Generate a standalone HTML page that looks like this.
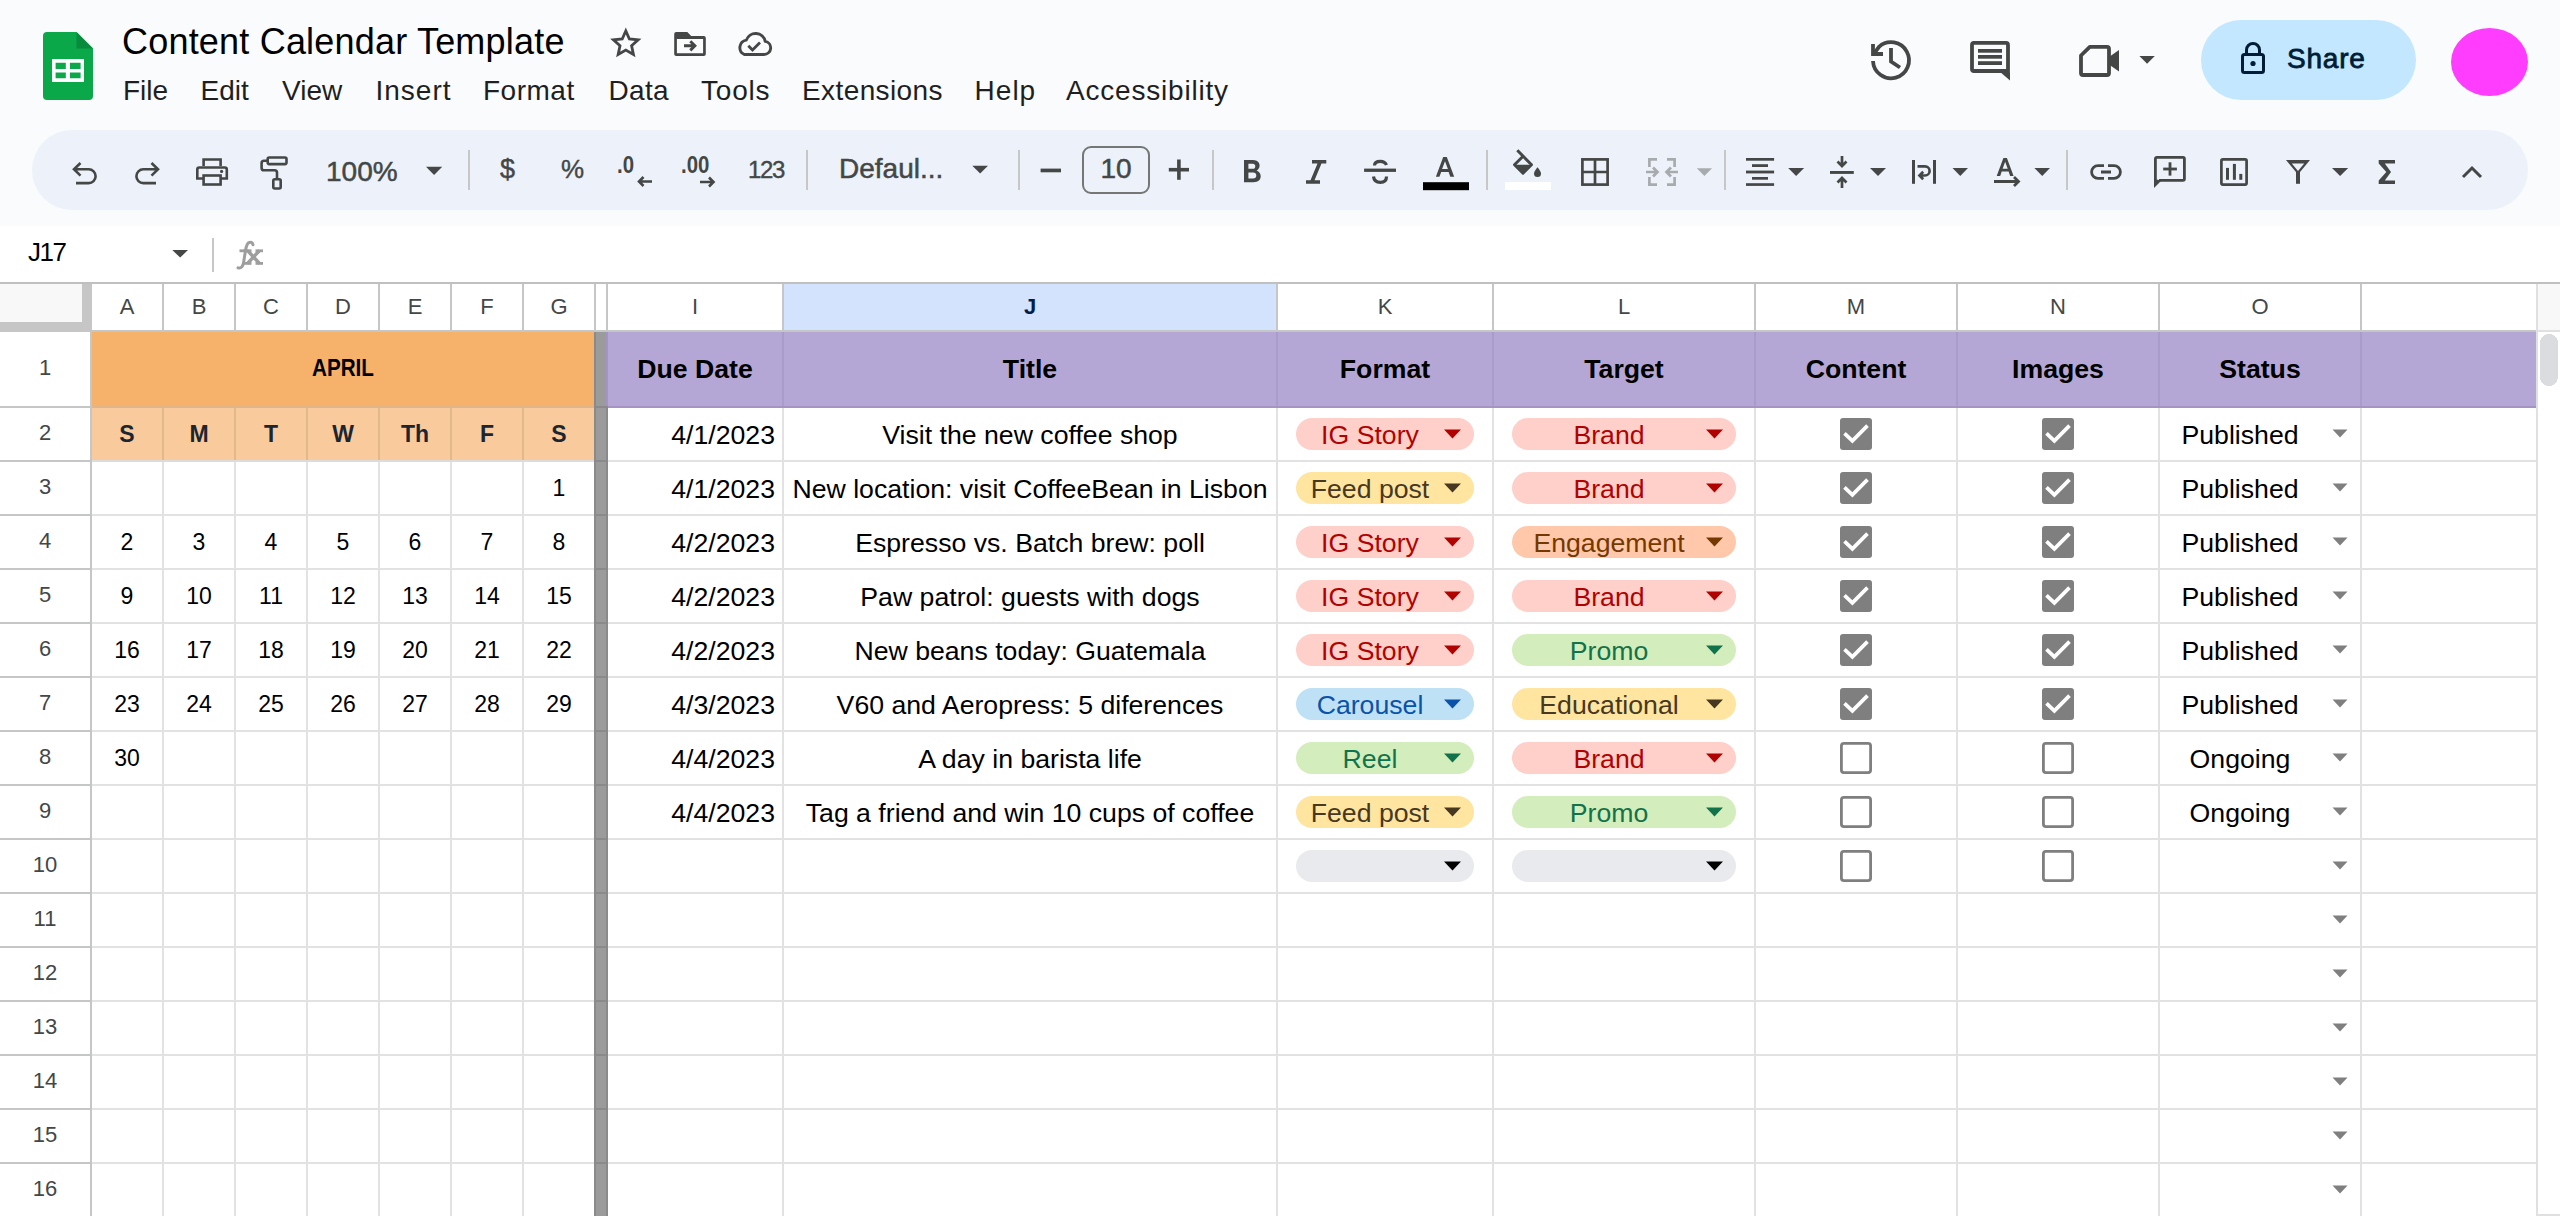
<!DOCTYPE html><html><head><meta charset="utf-8"><title>Content Calendar Template</title><style>
*{box-sizing:border-box}
html,body{margin:0;padding:0}
body{width:2560px;height:1216px;overflow:hidden;position:relative;background:#fff;font-family:"Liberation Sans", sans-serif;color:#000}
.t{position:absolute;white-space:nowrap}
.c{position:absolute;white-space:nowrap;font-size:26.67px;height:52px;line-height:54px;overflow:visible}
.svgl{position:absolute;left:0;top:0}

</style></head><body>
<div style="position:absolute;left:0;top:0;width:2560px;height:226px;background:#f9fbfd"></div>
<div style="position:absolute;left:32px;top:130px;width:2496px;height:80px;border-radius:40px;background:#edf2fa"></div>
<div style="position:absolute;left:2201px;top:20px;width:215px;height:80px;border-radius:40px;background:#c2e7ff"></div>
<div style="position:absolute;left:2451px;top:28px;width:77px;height:68px;border-radius:50%;background:#ff3dff"></div>
<div class="t" style="left:122px;top:18px;font-size:36px;line-height:48px;color:#000;letter-spacing:0.2px">Content Calendar Template</div>
<div class="t" style="left:123px;top:72px;font-size:28px;line-height:38px;color:#1f1f1f;letter-spacing:0px">File</div>
<div class="t" style="left:200.5px;top:72px;font-size:28px;line-height:38px;color:#1f1f1f;letter-spacing:0px">Edit</div>
<div class="t" style="left:282px;top:72px;font-size:28px;line-height:38px;color:#1f1f1f;letter-spacing:0px">View</div>
<div class="t" style="left:375.5px;top:72px;font-size:28px;line-height:38px;color:#1f1f1f;letter-spacing:1px">Insert</div>
<div class="t" style="left:483px;top:72px;font-size:28px;line-height:38px;color:#1f1f1f;letter-spacing:0.5px">Format</div>
<div class="t" style="left:608.5px;top:72px;font-size:28px;line-height:38px;color:#1f1f1f;letter-spacing:0.3px">Data</div>
<div class="t" style="left:701px;top:72px;font-size:28px;line-height:38px;color:#1f1f1f;letter-spacing:0.8px">Tools</div>
<div class="t" style="left:802px;top:72px;font-size:28px;line-height:38px;color:#1f1f1f;letter-spacing:0.4px">Extensions</div>
<div class="t" style="left:974.6px;top:72px;font-size:28px;line-height:38px;color:#1f1f1f;letter-spacing:1px">Help</div>
<div class="t" style="left:1066px;top:72px;font-size:28px;line-height:38px;color:#1f1f1f;letter-spacing:0.8px">Accessibility</div>
<div class="t" style="left:2287px;top:40px;font-size:28px;line-height:38px;color:#001d35;-webkit-text-stroke:0.8px #001d35;letter-spacing:0.8px">Share</div>
<div class="t" style="left:326px;top:153px;font-size:28px;line-height:38px;color:#444746;-webkit-text-stroke:0.5px #444746">100%</div>
<div class="t" style="left:748px;top:154px;font-size:24px;line-height:32px;color:#444746;letter-spacing:-1.3px;-webkit-text-stroke:0.4px #444746">123</div>
<div class="t" style="left:839px;top:150px;font-size:28px;line-height:38px;color:#444746;-webkit-text-stroke:0.5px #444746">Defaul...</div>
<div style="position:absolute;left:1082px;top:146px;width:68px;height:48px;border:2px solid #747775;border-radius:9px"></div>
<div class="t" style="left:1082px;top:150px;width:68px;text-align:center;font-size:28px;line-height:38px;color:#444746;-webkit-text-stroke:0.5px #444746">10</div>
<div class="t" style="left:500px;top:151px;font-size:27px;line-height:36px;color:#444746;-webkit-text-stroke:0.4px #444746">$</div>
<div class="t" style="left:561px;top:151px;font-size:26px;line-height:36px;color:#444746;-webkit-text-stroke:0.4px #444746">%</div>
<div class="t" style="left:617px;top:149px;font-size:24px;line-height:32px;color:#444746;font-weight:bold;transform:scaleX(0.85);transform-origin:0 0">.0</div>
<div class="t" style="left:681px;top:149px;font-size:24px;line-height:32px;color:#444746;font-weight:bold;transform:scaleX(0.85);transform-origin:0 0">.00</div>
<div class="t" style="left:28px;top:235px;font-size:26px;line-height:34px;color:#000;letter-spacing:-1.5px">J17</div>
<svg class="svgl" width="2560" height="300" viewBox="0 0 2560 300"><polygon points="625.80,30.90 629.39,38.96 638.16,39.88 631.60,45.79 633.44,54.42 625.80,50.00 618.16,54.42 620.00,45.79 613.44,39.88 622.21,38.96" fill="none" stroke="#444746" stroke-width="2.8" stroke-linejoin="miter"/><path d="M676.2,31.9 H687.3 L691.2,35.9 H703.8 a2,2 0 0 1 2,2 V54 a2,2 0 0 1 -2,2 H676.2 a2,2 0 0 1 -2,-2 V33.9 a2,2 0 0 1 2,-2 z M676.9,38.9 V53.2 H703.1 V38.9 z" fill="#444746" fill-rule="evenodd"/><path d="M684,45.8 H694 M690.3,41.2 L694.9,45.8 L690.3,50.4" fill="none" stroke="#444746" stroke-width="2.9"/><path d="M744.3,54.5 H764 a6.6,6.6 0 0 0 1.2,-13.1 a9.8,9.8 0 0 0 -18.9,-1.3 a7.6,7.6 0 0 0 -2,14.4 z" fill="none" stroke="#444746" stroke-width="2.9" stroke-linejoin="round"/><path d="M748.3,45.8 l4.2,4.2 l7.5,-7.5" fill="none" stroke="#444746" stroke-width="2.8"/><path d="M1874.5,53 L1879,46.8 A18,18 0 1 1 1873,61" fill="none" stroke="#444746" stroke-width="3.8"/><path d="M1873,44 V54 H1883" fill="none" stroke="#444746" stroke-width="3.8"/><path d="M1891,48 V61.5 L1900,67.5" fill="none" stroke="#444746" stroke-width="3.8"/><path d="M1973,42.9 H2006 a2,2 0 0 1 2,2 V71 H1974 a2,2 0 0 1 -2,-2 V44.9 a2,2 0 0 1 2,-2 z" fill="none" stroke="#444746" stroke-width="3.8"/><path d="M2001,72.8 H2010 V80.5 z" fill="#444746"/><rect x="1978" y="49" width="24" height="3.7" fill="#444746"/><rect x="1978" y="55" width="24" height="3.7" fill="#444746"/><rect x="1978" y="61.2" width="24" height="3.8" fill="#444746"/><path d="M2089.8,46.8 H2107 a2,2 0 0 1 2,2 V73 a2,2 0 0 1 -2,2 H2083 a2,2 0 0 1 -2,-2 V55.5 z" fill="none" stroke="#444746" stroke-width="3.8" stroke-linejoin="round"/><path d="M2109,57 L2119,50 V71.6 L2109,64.5 z" fill="#444746"/><path d="M2139.4,56 H2154.8 L2147.1,63.8 z" fill="#444746"/><rect x="2242.5" y="54.5" width="21" height="18" rx="2" fill="none" stroke="#001d35" stroke-width="3"/><path d="M2246.5,54.5 V50 a6.5,6.5 0 0 1 13,0 V54.5" fill="none" stroke="#001d35" stroke-width="3"/><circle cx="2253" cy="63.5" r="2.6" fill="#001d35"/><path d="M47,32 H76.5 L93,48.5 V96 a4,4 0 0 1 -4,4 H47 a4,4 0 0 1 -4,-4 V36 a4,4 0 0 1 4,-4 z" fill="#0ba84a"/><path d="M76.5,32 L93,48.5 H76.5 z" fill="#0a8a3c"/><path d="M52,59 H84 V82 H52 z M55.6,62.8 V68.9 H65.8 V62.8 z M69.9,62.8 V68.9 H80.6 V62.8 z M55.6,72.5 V78.3 H65.8 V72.5 z M69.9,72.5 V78.3 H80.6 V72.5 z" fill="#fff" fill-rule="evenodd"/><path d="M253,244.8 C252.5,242.5 250.5,241.6 248.8,242.6 C247,243.6 246.2,246.5 245.6,250 L243.6,262.5 C243,266.5 241,268.8 238,267.8" fill="none" stroke="#9e9e9e" stroke-width="3" stroke-linecap="round"/><rect x="239.5" y="249.4" width="8.5" height="2.8" fill="#9e9e9e"/><path d="M247.5,250.5 L259.5,263.5 M259.5,250.5 L247.5,263.5" fill="none" stroke="#9e9e9e" stroke-width="3.4"/><rect x="243.5" y="249.4" width="8" height="2.8" fill="#9e9e9e"/><rect x="255.5" y="249.4" width="7.5" height="2.8" fill="#9e9e9e"/><rect x="243.5" y="262" width="8" height="2.8" fill="#9e9e9e"/><rect x="255.5" y="262" width="7.5" height="2.8" fill="#9e9e9e"/><path d="M1244,160 H1253 C1257.5,160 1259.6,162.8 1259.6,165.5 C1259.6,168 1258.3,169.6 1256.6,170.5 C1259.1,171.4 1260.7,173.5 1260.7,176.3 C1260.7,179.8 1258.3,182.2 1253.5,182.2 H1244 Z M1248.4,163.7 V168.8 H1252.6 C1254.4,168.8 1255.3,167.8 1255.3,166.2 C1255.3,164.6 1254.4,163.7 1252.6,163.7 Z M1248.4,172.5 V178.5 H1253 C1255.2,178.5 1256.3,177.4 1256.3,175.5 C1256.3,173.6 1255.2,172.5 1253,172.5 Z" fill="#444746" fill-rule="evenodd"/><path d="M80.5,163 L74,169.3 L80.5,175.6 M74,169.3 H88.7 A6.9,6.9 0 0 1 88.7,183.1 H76" fill="none" stroke="#444746" stroke-width="2.6"/><path d="M151.5,163 L158,169.3 L151.5,175.6 M158,169.3 H143.3 A6.9,6.9 0 0 0 143.3,183.1 H156" fill="none" stroke="#444746" stroke-width="2.6"/><path d="M203.6,166 V159.5 H220.6 V166" fill="none" stroke="#444746" stroke-width="2.6"/><path d="M203.6,178.5 H197.3 V169.5 a2,2 0 0 1 2,-2 H224.8 a2,2 0 0 1 2,2 V178.5 H220.6" fill="none" stroke="#444746" stroke-width="2.6"/><rect x="203.6" y="175.5" width="17" height="9" fill="#edf2fa" stroke="#444746" stroke-width="2.6"/><circle cx="221.6" cy="171.4" r="1.6" fill="#444746"/><rect x="267.7" y="157.5" width="18.8" height="6.6" rx="1.5" fill="none" stroke="#444746" stroke-width="2.6"/><path d="M267.7,160.8 H264 a2.4,2.4 0 0 0 -2.4,2.4 V167.9 a2.4,2.4 0 0 0 2.4,2.4 H274.6 a2.4,2.4 0 0 1 2.4,2.4 V179" fill="none" stroke="#444746" stroke-width="2.6"/><rect x="273.3" y="179.3" width="7.4" height="9.2" rx="1.5" fill="none" stroke="#444746" stroke-width="2.6"/><path d="M426,166.7 H442.2 L434.1,175 z" fill="#444746"/><path d="M972.3,165.8 H988 L980.15,173.6 z" fill="#444746"/><path d="M1696.8,168.2 H1712 L1704.4,175.9 z" fill="#a8abae"/><path d="M1788.2,168 H1804.1 L1796.15,176 z" fill="#444746"/><path d="M1870,168 H1886 L1878.0,176 z" fill="#444746"/><path d="M1952.5,168 H1968 L1960.25,176 z" fill="#444746"/><path d="M2034.4,168 H2050 L2042.2,176 z" fill="#444746"/><path d="M2332,168 H2348.2 L2340.1,176 z" fill="#444746"/><path d="M172.3,250 H188 L180.15,257.6 z" fill="#444746"/><rect x="468" y="150" width="2" height="40" fill="#c7c7c7"/><rect x="806" y="150" width="2" height="40" fill="#c7c7c7"/><rect x="1018" y="150" width="2" height="40" fill="#c7c7c7"/><rect x="1212" y="150" width="2" height="40" fill="#c7c7c7"/><rect x="1486" y="150" width="2" height="40" fill="#c7c7c7"/><rect x="1724" y="150" width="2" height="40" fill="#c7c7c7"/><rect x="2066" y="150" width="2" height="40" fill="#c7c7c7"/><rect x="212" y="238" width="2" height="34" fill="#c7c7c7"/><path d="M652,181.5 H639 M643.5,177 L639,181.5 L643.5,186" fill="none" stroke="#444746" stroke-width="2.6"/><path d="M700,182 H713.5 M709,177.5 L713.5,182 L709,186.5" fill="none" stroke="#444746" stroke-width="2.6"/><rect x="1040.6" y="168.6" width="20.4" height="3.7" fill="#444746"/><rect x="1168.8" y="167.9" width="20.2" height="3.6" fill="#444746"/><rect x="1177.1" y="159.5" width="3.6" height="20.3" fill="#444746"/><path d="M1312,160 H1326.3 V163.6 H1321.5 L1314.5,180.3 H1320 V183.8 H1306 V180.3 H1310.5 L1317.5,163.6 H1312 z" fill="#444746"/><rect x="1364.1" y="168.6" width="31.9" height="3.3" fill="#444746"/><path d="M1374.5,165.5 C1374.5,162 1377,161.3 1380.3,161.3 C1383.5,161.3 1385.5,162.5 1386.5,165" fill="none" stroke="#444746" stroke-width="3.2"/><path d="M1373.5,176.5 C1374,181 1376.5,182.4 1380.3,182.4 C1384,182.4 1386.5,180.5 1386.5,176.5" fill="none" stroke="#444746" stroke-width="3.2"/><path d="M1435.9,176.8 L1443.2,157 H1446.8 L1454.2,176.8 H1450.3 L1448.6,172.1 H1441.2 L1439.4,176.8 z M1442.1,169.1 H1447.9 L1445,161.2 z" fill="#444746" fill-rule="evenodd"/><rect x="1423" y="182.2" width="46" height="8" fill="#000"/><path d="M1517.3,150.3 L1531.5,164.8 L1523,173.3 L1514.5,164.8 L1522.8,156.5" fill="none" stroke="#444746" stroke-width="2.9" stroke-linejoin="round"/><path d="M1514,164.8 H1532 L1523,173.8 z" fill="#444746"/><path d="M1537.5,167.3 C1535.5,170 1534,171.8 1534,173.5 a3.5,3.5 0 0 0 7,0 C1541,171.8 1539.5,170 1537.5,167.3 z" fill="#444746"/><rect x="1505" y="182" width="46" height="8" fill="#fff"/><rect x="1582.4" y="159.4" width="25.2" height="25.2" fill="none" stroke="#444746" stroke-width="2.7"/><path d="M1595,159 V185 M1582,172 H1608" fill="none" stroke="#444746" stroke-width="2.7"/><path d="M1657,159.3 H1649.4 V167 M1649.4,177 V184.7 H1657 M1667,159.3 H1674.6 V167 M1674.6,177 V184.7 H1667" fill="none" stroke="#a8abae" stroke-width="2.7"/><path d="M1646,172 H1657.5 M1653,167.5 L1657.5,172 L1653,176.5 M1678,172 H1666.5 M1671,167.5 L1666.5,172 L1671,176.5" fill="none" stroke="#a8abae" stroke-width="2.7"/><rect x="1746" y="158" width="28.1" height="2.7" fill="#444746"/><rect x="1752" y="164.2" width="16" height="2.8" fill="#444746"/><rect x="1746" y="170.6" width="28.1" height="2.8" fill="#444746"/><rect x="1752" y="177" width="16" height="2.7" fill="#444746"/><rect x="1746" y="183.2" width="28.1" height="2.7" fill="#444746"/><rect x="1830" y="171" width="23.8" height="2.9" fill="#444746"/><path d="M1842,156 V166 M1837.5,161.5 L1842,166 L1846.5,161.5 M1842,188 V178 M1837.5,182.5 L1842,178 L1846.5,182.5" fill="none" stroke="#444746" stroke-width="2.7"/><rect x="1912" y="160" width="3" height="23.8" fill="#444746"/><rect x="1933" y="160" width="3" height="23.8" fill="#444746"/><path d="M1917.5,166.3 H1925 A4.6,4.6 0 0 1 1925,175.5 H1919.5 M1923.2,171.8 L1919.5,175.5 L1923.2,179.2" fill="none" stroke="#444746" stroke-width="2.7"/><path d="M1996.7,175.9 L2003.4,158 H2006.9 L2013.6,175.9 H2010.1 L2008.6,171.6 H2001.7 L2000.2,175.9 z M2002.6,168.8 H2007.7 L2005.15,161.7 z" fill="#444746" fill-rule="evenodd"/><path d="M1994,181.5 H2018 M2014,177 L2018.5,181.5 L2014,186" fill="none" stroke="#444746" stroke-width="2.8"/><path d="M2104,165.6 H2098 A6.4,6.4 0 0 0 2098,178.4 H2104 M2108,165.6 H2114 A6.4,6.4 0 0 1 2114,178.4 H2108 M2101,172 H2111" fill="none" stroke="#444746" stroke-width="2.8"/><path d="M2155.4,183 V158.8 a1.4,1.4 0 0 1 1.4,-1.4 H2183 a1.4,1.4 0 0 1 1.4,1.4 V179 a1.4,1.4 0 0 1 -1.4,1.4 H2159" fill="none" stroke="#444746" stroke-width="2.8"/><path d="M2154,179 V188 L2161.5,180.4 z" fill="#444746"/><rect x="2163.2" y="167.6" width="13.7" height="2.8" fill="#444746"/><rect x="2168.6" y="162.3" width="2.8" height="13.3" fill="#444746"/><rect x="2221.4" y="159.4" width="25.2" height="25.2" rx="1.5" fill="none" stroke="#444746" stroke-width="2.7"/><rect x="2226" y="167.9" width="3" height="11.9" fill="#444746"/><rect x="2232.9" y="163.9" width="3" height="15.9" fill="#444746"/><rect x="2239.3" y="173.9" width="3" height="5.9" fill="#444746"/><path d="M2286,160 H2310 L2298,174.5 z M2291.8,163.4 L2298,170.9 L2304.2,163.4 z" fill="#444746" fill-rule="evenodd"/><rect x="2296" y="171" width="4" height="12.8" fill="#444746"/><path d="M2378.7,160 H2395 V163.6 H2384.8 L2391,172 L2384.8,180.4 H2395 V184 H2378.7 V180.6 L2386.3,172 L2378.7,163.4 z" fill="#444746"/><path d="M2463,177 L2472,168 L2481,177" fill="none" stroke="#444746" stroke-width="3"/></svg>
<svg class="svgl" width="2560" height="1216" viewBox="0 0 2560 1216" shape-rendering="crispEdges"><rect x="92" y="460" width="502" height="2" fill="#e2e2e2"/><rect x="608" y="460" width="1928" height="2" fill="#e2e2e2"/><rect x="92" y="514" width="502" height="2" fill="#e2e2e2"/><rect x="608" y="514" width="1928" height="2" fill="#e2e2e2"/><rect x="92" y="568" width="502" height="2" fill="#e2e2e2"/><rect x="608" y="568" width="1928" height="2" fill="#e2e2e2"/><rect x="92" y="622" width="502" height="2" fill="#e2e2e2"/><rect x="608" y="622" width="1928" height="2" fill="#e2e2e2"/><rect x="92" y="676" width="502" height="2" fill="#e2e2e2"/><rect x="608" y="676" width="1928" height="2" fill="#e2e2e2"/><rect x="92" y="730" width="502" height="2" fill="#e2e2e2"/><rect x="608" y="730" width="1928" height="2" fill="#e2e2e2"/><rect x="92" y="784" width="502" height="2" fill="#e2e2e2"/><rect x="608" y="784" width="1928" height="2" fill="#e2e2e2"/><rect x="92" y="838" width="502" height="2" fill="#e2e2e2"/><rect x="608" y="838" width="1928" height="2" fill="#e2e2e2"/><rect x="92" y="892" width="502" height="2" fill="#e2e2e2"/><rect x="608" y="892" width="1928" height="2" fill="#e2e2e2"/><rect x="92" y="946" width="502" height="2" fill="#e2e2e2"/><rect x="608" y="946" width="1928" height="2" fill="#e2e2e2"/><rect x="92" y="1000" width="502" height="2" fill="#e2e2e2"/><rect x="608" y="1000" width="1928" height="2" fill="#e2e2e2"/><rect x="92" y="1054" width="502" height="2" fill="#e2e2e2"/><rect x="608" y="1054" width="1928" height="2" fill="#e2e2e2"/><rect x="92" y="1108" width="502" height="2" fill="#e2e2e2"/><rect x="608" y="1108" width="1928" height="2" fill="#e2e2e2"/><rect x="92" y="1162" width="502" height="2" fill="#e2e2e2"/><rect x="608" y="1162" width="1928" height="2" fill="#e2e2e2"/><rect x="92" y="1216" width="502" height="2" fill="#e2e2e2"/><rect x="608" y="1216" width="1928" height="2" fill="#e2e2e2"/><rect x="92" y="406" width="502" height="2" fill="#e2e2e2"/><rect x="162" y="408" width="2" height="808" fill="#e2e2e2"/><rect x="234" y="408" width="2" height="808" fill="#e2e2e2"/><rect x="306" y="408" width="2" height="808" fill="#e2e2e2"/><rect x="378" y="408" width="2" height="808" fill="#e2e2e2"/><rect x="450" y="408" width="2" height="808" fill="#e2e2e2"/><rect x="522" y="408" width="2" height="808" fill="#e2e2e2"/><rect x="782" y="408" width="2" height="808" fill="#e2e2e2"/><rect x="1276" y="408" width="2" height="808" fill="#e2e2e2"/><rect x="1492" y="408" width="2" height="808" fill="#e2e2e2"/><rect x="1754" y="408" width="2" height="808" fill="#e2e2e2"/><rect x="1956" y="408" width="2" height="808" fill="#e2e2e2"/><rect x="2158" y="408" width="2" height="808" fill="#e2e2e2"/><rect x="2360" y="408" width="2" height="808" fill="#e2e2e2"/><rect x="2536" y="408" width="2" height="808" fill="#e2e2e2"/><rect x="92" y="332" width="502" height="74" fill="#f6b26b"/><rect x="606" y="332" width="1930" height="74" fill="#b4a7d6"/><rect x="606" y="406" width="1930" height="2" fill="#a394c3"/><rect x="782" y="332" width="2" height="74" fill="#a99bca"/><rect x="1276" y="332" width="2" height="74" fill="#a99bca"/><rect x="1492" y="332" width="2" height="74" fill="#a99bca"/><rect x="1754" y="332" width="2" height="74" fill="#a99bca"/><rect x="1956" y="332" width="2" height="74" fill="#a99bca"/><rect x="2158" y="332" width="2" height="74" fill="#a99bca"/><rect x="2360" y="332" width="2" height="74" fill="#a99bca"/><rect x="606" y="332" width="2" height="76" fill="#a394c3"/><rect x="92" y="408" width="502" height="52" fill="#f9cb9c"/><rect x="162" y="408" width="2" height="52" fill="#e3b88a"/><rect x="234" y="408" width="2" height="52" fill="#e3b88a"/><rect x="306" y="408" width="2" height="52" fill="#e3b88a"/><rect x="378" y="408" width="2" height="52" fill="#e3b88a"/><rect x="450" y="408" width="2" height="52" fill="#e3b88a"/><rect x="522" y="408" width="2" height="52" fill="#e3b88a"/><rect x="92" y="406" width="502" height="2" fill="#e0b58b"/><rect x="92" y="460" width="502" height="2" fill="#dcdcdc"/><rect x="594" y="332" width="14" height="884" fill="#9b9b9b"/><rect x="594" y="332" width="2" height="884" fill="#8a8a8a"/><rect x="606" y="408" width="2" height="808" fill="#8a8a8a"/><rect x="594" y="406" width="14" height="2" fill="#8a8a8a"/><rect x="594" y="460" width="14" height="2" fill="#8a8a8a"/><rect x="594" y="514" width="14" height="2" fill="#8a8a8a"/><rect x="594" y="568" width="14" height="2" fill="#8a8a8a"/><rect x="594" y="622" width="14" height="2" fill="#8a8a8a"/><rect x="594" y="676" width="14" height="2" fill="#8a8a8a"/><rect x="594" y="730" width="14" height="2" fill="#8a8a8a"/><rect x="594" y="784" width="14" height="2" fill="#8a8a8a"/><rect x="594" y="838" width="14" height="2" fill="#8a8a8a"/><rect x="594" y="892" width="14" height="2" fill="#8a8a8a"/><rect x="594" y="946" width="14" height="2" fill="#8a8a8a"/><rect x="594" y="1000" width="14" height="2" fill="#8a8a8a"/><rect x="594" y="1054" width="14" height="2" fill="#8a8a8a"/><rect x="594" y="1108" width="14" height="2" fill="#8a8a8a"/><rect x="594" y="1162" width="14" height="2" fill="#8a8a8a"/><rect x="594" y="1216" width="14" height="2" fill="#8a8a8a"/><rect x="606" y="332" width="2" height="74" fill="#a394c3"/><rect x="0" y="282" width="2560" height="2" fill="#c0c0c0"/><rect x="784" y="284" width="492" height="46" fill="#d3e3fd"/><rect x="0" y="330" width="2538" height="2" fill="#c4c7c5"/><rect x="2538" y="330" width="22" height="2" fill="#e0e0e0"/><rect x="162" y="284" width="2" height="46" fill="#c4c7c5"/><rect x="234" y="284" width="2" height="46" fill="#c4c7c5"/><rect x="306" y="284" width="2" height="46" fill="#c4c7c5"/><rect x="378" y="284" width="2" height="46" fill="#c4c7c5"/><rect x="450" y="284" width="2" height="46" fill="#c4c7c5"/><rect x="522" y="284" width="2" height="46" fill="#c4c7c5"/><rect x="594" y="284" width="2" height="46" fill="#c4c7c5"/><rect x="782" y="284" width="2" height="46" fill="#c4c7c5"/><rect x="1276" y="284" width="2" height="46" fill="#c4c7c5"/><rect x="1492" y="284" width="2" height="46" fill="#c4c7c5"/><rect x="1754" y="284" width="2" height="46" fill="#c4c7c5"/><rect x="1956" y="284" width="2" height="46" fill="#c4c7c5"/><rect x="2158" y="284" width="2" height="46" fill="#c4c7c5"/><rect x="2360" y="284" width="2" height="46" fill="#c4c7c5"/><rect x="2536" y="284" width="2" height="46" fill="#c4c7c5"/><rect x="594" y="284" width="2" height="46" fill="#c4c7c5"/><rect x="606" y="284" width="2" height="46" fill="#c4c7c5"/><rect x="0" y="284" width="82" height="38" fill="#f8f8f8"/><rect x="0" y="322" width="92" height="10" fill="#c6c6c6"/><rect x="82" y="284" width="10" height="48" fill="#c6c6c6"/><rect x="90" y="332" width="2" height="884" fill="#c4c7c5"/><rect x="0" y="406" width="90" height="2" fill="#c4c7c5"/><rect x="0" y="460" width="90" height="2" fill="#c4c7c5"/><rect x="0" y="514" width="90" height="2" fill="#c4c7c5"/><rect x="0" y="568" width="90" height="2" fill="#c4c7c5"/><rect x="0" y="622" width="90" height="2" fill="#c4c7c5"/><rect x="0" y="676" width="90" height="2" fill="#c4c7c5"/><rect x="0" y="730" width="90" height="2" fill="#c4c7c5"/><rect x="0" y="784" width="90" height="2" fill="#c4c7c5"/><rect x="0" y="838" width="90" height="2" fill="#c4c7c5"/><rect x="0" y="892" width="90" height="2" fill="#c4c7c5"/><rect x="0" y="946" width="90" height="2" fill="#c4c7c5"/><rect x="0" y="1000" width="90" height="2" fill="#c4c7c5"/><rect x="0" y="1054" width="90" height="2" fill="#c4c7c5"/><rect x="0" y="1108" width="90" height="2" fill="#c4c7c5"/><rect x="0" y="1162" width="90" height="2" fill="#c4c7c5"/><rect x="0" y="1216" width="90" height="2" fill="#c4c7c5"/><rect x="2538" y="284" width="22" height="46" fill="#f8f8f8"/><rect x="2536" y="284" width="2" height="932" fill="#e0e0e0"/><rect x="2538" y="1214" width="22" height="2" fill="#e0e0e0"/><rect x="2540" y="334" width="18" height="52" rx="9" fill="#dadce0"/></svg>
<div class="t" style="left:92px;top:284px;width:70px;text-align:center;font-size:22px;line-height:46px;color:#444746;font-weight:normal">A</div>
<div class="t" style="left:164px;top:284px;width:70px;text-align:center;font-size:22px;line-height:46px;color:#444746;font-weight:normal">B</div>
<div class="t" style="left:236px;top:284px;width:70px;text-align:center;font-size:22px;line-height:46px;color:#444746;font-weight:normal">C</div>
<div class="t" style="left:308px;top:284px;width:70px;text-align:center;font-size:22px;line-height:46px;color:#444746;font-weight:normal">D</div>
<div class="t" style="left:380px;top:284px;width:70px;text-align:center;font-size:22px;line-height:46px;color:#444746;font-weight:normal">E</div>
<div class="t" style="left:452px;top:284px;width:70px;text-align:center;font-size:22px;line-height:46px;color:#444746;font-weight:normal">F</div>
<div class="t" style="left:524px;top:284px;width:70px;text-align:center;font-size:22px;line-height:46px;color:#444746;font-weight:normal">G</div>
<div class="t" style="left:608px;top:284px;width:174px;text-align:center;font-size:22px;line-height:46px;color:#444746;font-weight:normal">I</div>
<div class="t" style="left:784px;top:284px;width:492px;text-align:center;font-size:22px;line-height:46px;color:#041e49;font-weight:bold">J</div>
<div class="t" style="left:1278px;top:284px;width:214px;text-align:center;font-size:22px;line-height:46px;color:#444746;font-weight:normal">K</div>
<div class="t" style="left:1494px;top:284px;width:260px;text-align:center;font-size:22px;line-height:46px;color:#444746;font-weight:normal">L</div>
<div class="t" style="left:1756px;top:284px;width:200px;text-align:center;font-size:22px;line-height:46px;color:#444746;font-weight:normal">M</div>
<div class="t" style="left:1958px;top:284px;width:200px;text-align:center;font-size:22px;line-height:46px;color:#444746;font-weight:normal">N</div>
<div class="t" style="left:2160px;top:284px;width:200px;text-align:center;font-size:22px;line-height:46px;color:#444746;font-weight:normal">O</div>
<div class="t" style="left:0;top:331px;width:90px;text-align:center;font-size:22px;line-height:74px;color:#444746">1</div>
<div class="t" style="left:0;top:407px;width:90px;text-align:center;font-size:22px;line-height:52px;color:#444746">2</div>
<div class="t" style="left:0;top:461px;width:90px;text-align:center;font-size:22px;line-height:52px;color:#444746">3</div>
<div class="t" style="left:0;top:515px;width:90px;text-align:center;font-size:22px;line-height:52px;color:#444746">4</div>
<div class="t" style="left:0;top:569px;width:90px;text-align:center;font-size:22px;line-height:52px;color:#444746">5</div>
<div class="t" style="left:0;top:623px;width:90px;text-align:center;font-size:22px;line-height:52px;color:#444746">6</div>
<div class="t" style="left:0;top:677px;width:90px;text-align:center;font-size:22px;line-height:52px;color:#444746">7</div>
<div class="t" style="left:0;top:731px;width:90px;text-align:center;font-size:22px;line-height:52px;color:#444746">8</div>
<div class="t" style="left:0;top:785px;width:90px;text-align:center;font-size:22px;line-height:52px;color:#444746">9</div>
<div class="t" style="left:0;top:839px;width:90px;text-align:center;font-size:22px;line-height:52px;color:#444746">10</div>
<div class="t" style="left:0;top:893px;width:90px;text-align:center;font-size:22px;line-height:52px;color:#444746">11</div>
<div class="t" style="left:0;top:947px;width:90px;text-align:center;font-size:22px;line-height:52px;color:#444746">12</div>
<div class="t" style="left:0;top:1001px;width:90px;text-align:center;font-size:22px;line-height:52px;color:#444746">13</div>
<div class="t" style="left:0;top:1055px;width:90px;text-align:center;font-size:22px;line-height:52px;color:#444746">14</div>
<div class="t" style="left:0;top:1109px;width:90px;text-align:center;font-size:22px;line-height:52px;color:#444746">15</div>
<div class="t" style="left:0;top:1163px;width:90px;text-align:center;font-size:22px;line-height:52px;color:#444746">16</div>
<div class="t" style="left:92px;top:332px;width:502px;text-align:center;font-size:24px;line-height:71px;font-weight:bold;color:#000;transform:scaleX(0.86)">APRIL</div>
<div class="t" style="left:92px;top:408px;width:70px;text-align:center;font-size:23px;line-height:52px;font-weight:bold;color:#1c2530">S</div>
<div class="t" style="left:164px;top:408px;width:70px;text-align:center;font-size:23px;line-height:52px;font-weight:bold;color:#1c2530">M</div>
<div class="t" style="left:236px;top:408px;width:70px;text-align:center;font-size:23px;line-height:52px;font-weight:bold;color:#1c2530">T</div>
<div class="t" style="left:308px;top:408px;width:70px;text-align:center;font-size:23px;line-height:52px;font-weight:bold;color:#1c2530">W</div>
<div class="t" style="left:380px;top:408px;width:70px;text-align:center;font-size:23px;line-height:52px;font-weight:bold;color:#1c2530">Th</div>
<div class="t" style="left:452px;top:408px;width:70px;text-align:center;font-size:23px;line-height:52px;font-weight:bold;color:#1c2530">F</div>
<div class="t" style="left:524px;top:408px;width:70px;text-align:center;font-size:23px;line-height:52px;font-weight:bold;color:#1c2530">S</div>
<div class="t" style="left:524px;top:462px;width:70px;text-align:center;font-size:23px;line-height:52px;color:#000">1</div>
<div class="t" style="left:92px;top:516px;width:70px;text-align:center;font-size:23px;line-height:52px;color:#000">2</div>
<div class="t" style="left:164px;top:516px;width:70px;text-align:center;font-size:23px;line-height:52px;color:#000">3</div>
<div class="t" style="left:236px;top:516px;width:70px;text-align:center;font-size:23px;line-height:52px;color:#000">4</div>
<div class="t" style="left:308px;top:516px;width:70px;text-align:center;font-size:23px;line-height:52px;color:#000">5</div>
<div class="t" style="left:380px;top:516px;width:70px;text-align:center;font-size:23px;line-height:52px;color:#000">6</div>
<div class="t" style="left:452px;top:516px;width:70px;text-align:center;font-size:23px;line-height:52px;color:#000">7</div>
<div class="t" style="left:524px;top:516px;width:70px;text-align:center;font-size:23px;line-height:52px;color:#000">8</div>
<div class="t" style="left:92px;top:570px;width:70px;text-align:center;font-size:23px;line-height:52px;color:#000">9</div>
<div class="t" style="left:164px;top:570px;width:70px;text-align:center;font-size:23px;line-height:52px;color:#000">10</div>
<div class="t" style="left:236px;top:570px;width:70px;text-align:center;font-size:23px;line-height:52px;color:#000">11</div>
<div class="t" style="left:308px;top:570px;width:70px;text-align:center;font-size:23px;line-height:52px;color:#000">12</div>
<div class="t" style="left:380px;top:570px;width:70px;text-align:center;font-size:23px;line-height:52px;color:#000">13</div>
<div class="t" style="left:452px;top:570px;width:70px;text-align:center;font-size:23px;line-height:52px;color:#000">14</div>
<div class="t" style="left:524px;top:570px;width:70px;text-align:center;font-size:23px;line-height:52px;color:#000">15</div>
<div class="t" style="left:92px;top:624px;width:70px;text-align:center;font-size:23px;line-height:52px;color:#000">16</div>
<div class="t" style="left:164px;top:624px;width:70px;text-align:center;font-size:23px;line-height:52px;color:#000">17</div>
<div class="t" style="left:236px;top:624px;width:70px;text-align:center;font-size:23px;line-height:52px;color:#000">18</div>
<div class="t" style="left:308px;top:624px;width:70px;text-align:center;font-size:23px;line-height:52px;color:#000">19</div>
<div class="t" style="left:380px;top:624px;width:70px;text-align:center;font-size:23px;line-height:52px;color:#000">20</div>
<div class="t" style="left:452px;top:624px;width:70px;text-align:center;font-size:23px;line-height:52px;color:#000">21</div>
<div class="t" style="left:524px;top:624px;width:70px;text-align:center;font-size:23px;line-height:52px;color:#000">22</div>
<div class="t" style="left:92px;top:678px;width:70px;text-align:center;font-size:23px;line-height:52px;color:#000">23</div>
<div class="t" style="left:164px;top:678px;width:70px;text-align:center;font-size:23px;line-height:52px;color:#000">24</div>
<div class="t" style="left:236px;top:678px;width:70px;text-align:center;font-size:23px;line-height:52px;color:#000">25</div>
<div class="t" style="left:308px;top:678px;width:70px;text-align:center;font-size:23px;line-height:52px;color:#000">26</div>
<div class="t" style="left:380px;top:678px;width:70px;text-align:center;font-size:23px;line-height:52px;color:#000">27</div>
<div class="t" style="left:452px;top:678px;width:70px;text-align:center;font-size:23px;line-height:52px;color:#000">28</div>
<div class="t" style="left:524px;top:678px;width:70px;text-align:center;font-size:23px;line-height:52px;color:#000">29</div>
<div class="t" style="left:92px;top:732px;width:70px;text-align:center;font-size:23px;line-height:52px;color:#000">30</div>
<div class="t" style="left:608px;top:332px;width:174px;text-align:center;font-size:26.67px;line-height:74px;font-weight:bold;color:#000">Due Date</div>
<div class="t" style="left:784px;top:332px;width:492px;text-align:center;font-size:26.67px;line-height:74px;font-weight:bold;color:#000">Title</div>
<div class="t" style="left:1278px;top:332px;width:214px;text-align:center;font-size:26.67px;line-height:74px;font-weight:bold;color:#000">Format</div>
<div class="t" style="left:1494px;top:332px;width:260px;text-align:center;font-size:26.67px;line-height:74px;font-weight:bold;color:#000">Target</div>
<div class="t" style="left:1756px;top:332px;width:200px;text-align:center;font-size:26.67px;line-height:74px;font-weight:bold;color:#000">Content</div>
<div class="t" style="left:1958px;top:332px;width:200px;text-align:center;font-size:26.67px;line-height:74px;font-weight:bold;color:#000">Images</div>
<div class="t" style="left:2160px;top:332px;width:200px;text-align:center;font-size:26.67px;line-height:74px;font-weight:bold;color:#000">Status</div>
<div class="c" style="left:608px;top:408px;width:167px;text-align:right">4/1/2023</div>
<div class="c" style="left:784px;top:408px;width:492px;text-align:center">Visit the new coffee shop</div>
<div style="position:absolute;left:1296px;top:418px;width:178px;height:32px;border-radius:16px;background:#ffcfc9"></div>
<div class="c" style="left:1296px;top:408px;width:148px;text-align:center;color:#b10202">IG Story</div>
<div style="position:absolute;left:1512px;top:418px;width:224px;height:32px;border-radius:16px;background:#ffcfc9"></div>
<div class="c" style="left:1512px;top:408px;width:194px;text-align:center;color:#b10202">Brand</div>
<div class="c" style="left:608px;top:462px;width:167px;text-align:right">4/1/2023</div>
<div class="c" style="left:784px;top:462px;width:492px;text-align:center">New location: visit CoffeeBean in Lisbon</div>
<div style="position:absolute;left:1296px;top:472px;width:178px;height:32px;border-radius:16px;background:#ffe5a0"></div>
<div class="c" style="left:1296px;top:462px;width:148px;text-align:center;color:#473821">Feed post</div>
<div style="position:absolute;left:1512px;top:472px;width:224px;height:32px;border-radius:16px;background:#ffcfc9"></div>
<div class="c" style="left:1512px;top:462px;width:194px;text-align:center;color:#b10202">Brand</div>
<div class="c" style="left:608px;top:516px;width:167px;text-align:right">4/2/2023</div>
<div class="c" style="left:784px;top:516px;width:492px;text-align:center">Espresso vs. Batch brew: poll</div>
<div style="position:absolute;left:1296px;top:526px;width:178px;height:32px;border-radius:16px;background:#ffcfc9"></div>
<div class="c" style="left:1296px;top:516px;width:148px;text-align:center;color:#b10202">IG Story</div>
<div style="position:absolute;left:1512px;top:526px;width:224px;height:32px;border-radius:16px;background:#ffc8aa"></div>
<div class="c" style="left:1512px;top:516px;width:194px;text-align:center;color:#753800">Engagement</div>
<div class="c" style="left:608px;top:570px;width:167px;text-align:right">4/2/2023</div>
<div class="c" style="left:784px;top:570px;width:492px;text-align:center">Paw patrol: guests with dogs</div>
<div style="position:absolute;left:1296px;top:580px;width:178px;height:32px;border-radius:16px;background:#ffcfc9"></div>
<div class="c" style="left:1296px;top:570px;width:148px;text-align:center;color:#b10202">IG Story</div>
<div style="position:absolute;left:1512px;top:580px;width:224px;height:32px;border-radius:16px;background:#ffcfc9"></div>
<div class="c" style="left:1512px;top:570px;width:194px;text-align:center;color:#b10202">Brand</div>
<div class="c" style="left:608px;top:624px;width:167px;text-align:right">4/2/2023</div>
<div class="c" style="left:784px;top:624px;width:492px;text-align:center">New beans today: Guatemala</div>
<div style="position:absolute;left:1296px;top:634px;width:178px;height:32px;border-radius:16px;background:#ffcfc9"></div>
<div class="c" style="left:1296px;top:624px;width:148px;text-align:center;color:#b10202">IG Story</div>
<div style="position:absolute;left:1512px;top:634px;width:224px;height:32px;border-radius:16px;background:#d4edbc"></div>
<div class="c" style="left:1512px;top:624px;width:194px;text-align:center;color:#11734b">Promo</div>
<div class="c" style="left:608px;top:678px;width:167px;text-align:right">4/3/2023</div>
<div class="c" style="left:784px;top:678px;width:492px;text-align:center">V60 and Aeropress: 5 diferences</div>
<div style="position:absolute;left:1296px;top:688px;width:178px;height:32px;border-radius:16px;background:#bfe1f6"></div>
<div class="c" style="left:1296px;top:678px;width:148px;text-align:center;color:#0a53a8">Carousel</div>
<div style="position:absolute;left:1512px;top:688px;width:224px;height:32px;border-radius:16px;background:#ffe5a0"></div>
<div class="c" style="left:1512px;top:678px;width:194px;text-align:center;color:#473821">Educational</div>
<div class="c" style="left:608px;top:732px;width:167px;text-align:right">4/4/2023</div>
<div class="c" style="left:784px;top:732px;width:492px;text-align:center">A day in barista life</div>
<div style="position:absolute;left:1296px;top:742px;width:178px;height:32px;border-radius:16px;background:#d4edbc"></div>
<div class="c" style="left:1296px;top:732px;width:148px;text-align:center;color:#11734b">Reel</div>
<div style="position:absolute;left:1512px;top:742px;width:224px;height:32px;border-radius:16px;background:#ffcfc9"></div>
<div class="c" style="left:1512px;top:732px;width:194px;text-align:center;color:#b10202">Brand</div>
<div class="c" style="left:608px;top:786px;width:167px;text-align:right">4/4/2023</div>
<div class="c" style="left:784px;top:786px;width:492px;text-align:center">Tag a friend and win 10 cups of coffee</div>
<div style="position:absolute;left:1296px;top:796px;width:178px;height:32px;border-radius:16px;background:#ffe5a0"></div>
<div class="c" style="left:1296px;top:786px;width:148px;text-align:center;color:#473821">Feed post</div>
<div style="position:absolute;left:1512px;top:796px;width:224px;height:32px;border-radius:16px;background:#d4edbc"></div>
<div class="c" style="left:1512px;top:786px;width:194px;text-align:center;color:#11734b">Promo</div>
<div style="position:absolute;left:1296px;top:850px;width:178px;height:32px;border-radius:16px;background:#e8eaed"></div>
<div style="position:absolute;left:1512px;top:850px;width:224px;height:32px;border-radius:16px;background:#e8eaed"></div>
<div class="c" style="left:2160px;top:408px;width:160px;text-align:center">Published</div>
<div class="c" style="left:2160px;top:462px;width:160px;text-align:center">Published</div>
<div class="c" style="left:2160px;top:516px;width:160px;text-align:center">Published</div>
<div class="c" style="left:2160px;top:570px;width:160px;text-align:center">Published</div>
<div class="c" style="left:2160px;top:624px;width:160px;text-align:center">Published</div>
<div class="c" style="left:2160px;top:678px;width:160px;text-align:center">Published</div>
<div class="c" style="left:2160px;top:732px;width:160px;text-align:center">Ongoing</div>
<div class="c" style="left:2160px;top:786px;width:160px;text-align:center">Ongoing</div>
<svg class="svgl" width="2560" height="1216" viewBox="0 0 2560 1216"><path d="M1444,429.5 h17 l-8.5,9 z" fill="#b10202"/><path d="M1706,429.5 h17 l-8.5,9 z" fill="#b10202"/><rect x="1840" y="418" width="32" height="32" rx="3" fill="#7f7f7f"/><path d="M1844.5,433.3 L1852.4,440.8 L1867.5,425.6" fill="none" stroke="#fff" stroke-width="3.7"/><rect x="2042" y="418" width="32" height="32" rx="3" fill="#7f7f7f"/><path d="M2046.5,433.3 L2054.4,440.8 L2069.5,425.6" fill="none" stroke="#fff" stroke-width="3.7"/><path d="M1444,483.5 h17 l-8.5,9 z" fill="#473821"/><path d="M1706,483.5 h17 l-8.5,9 z" fill="#b10202"/><rect x="1840" y="472" width="32" height="32" rx="3" fill="#7f7f7f"/><path d="M1844.5,487.3 L1852.4,494.8 L1867.5,479.6" fill="none" stroke="#fff" stroke-width="3.7"/><rect x="2042" y="472" width="32" height="32" rx="3" fill="#7f7f7f"/><path d="M2046.5,487.3 L2054.4,494.8 L2069.5,479.6" fill="none" stroke="#fff" stroke-width="3.7"/><path d="M1444,537.5 h17 l-8.5,9 z" fill="#b10202"/><path d="M1706,537.5 h17 l-8.5,9 z" fill="#753800"/><rect x="1840" y="526" width="32" height="32" rx="3" fill="#7f7f7f"/><path d="M1844.5,541.3 L1852.4,548.8 L1867.5,533.6" fill="none" stroke="#fff" stroke-width="3.7"/><rect x="2042" y="526" width="32" height="32" rx="3" fill="#7f7f7f"/><path d="M2046.5,541.3 L2054.4,548.8 L2069.5,533.6" fill="none" stroke="#fff" stroke-width="3.7"/><path d="M1444,591.5 h17 l-8.5,9 z" fill="#b10202"/><path d="M1706,591.5 h17 l-8.5,9 z" fill="#b10202"/><rect x="1840" y="580" width="32" height="32" rx="3" fill="#7f7f7f"/><path d="M1844.5,595.3 L1852.4,602.8 L1867.5,587.6" fill="none" stroke="#fff" stroke-width="3.7"/><rect x="2042" y="580" width="32" height="32" rx="3" fill="#7f7f7f"/><path d="M2046.5,595.3 L2054.4,602.8 L2069.5,587.6" fill="none" stroke="#fff" stroke-width="3.7"/><path d="M1444,645.5 h17 l-8.5,9 z" fill="#b10202"/><path d="M1706,645.5 h17 l-8.5,9 z" fill="#11734b"/><rect x="1840" y="634" width="32" height="32" rx="3" fill="#7f7f7f"/><path d="M1844.5,649.3 L1852.4,656.8 L1867.5,641.6" fill="none" stroke="#fff" stroke-width="3.7"/><rect x="2042" y="634" width="32" height="32" rx="3" fill="#7f7f7f"/><path d="M2046.5,649.3 L2054.4,656.8 L2069.5,641.6" fill="none" stroke="#fff" stroke-width="3.7"/><path d="M1444,699.5 h17 l-8.5,9 z" fill="#0a53a8"/><path d="M1706,699.5 h17 l-8.5,9 z" fill="#473821"/><rect x="1840" y="688" width="32" height="32" rx="3" fill="#7f7f7f"/><path d="M1844.5,703.3 L1852.4,710.8 L1867.5,695.6" fill="none" stroke="#fff" stroke-width="3.7"/><rect x="2042" y="688" width="32" height="32" rx="3" fill="#7f7f7f"/><path d="M2046.5,703.3 L2054.4,710.8 L2069.5,695.6" fill="none" stroke="#fff" stroke-width="3.7"/><path d="M1444,753.5 h17 l-8.5,9 z" fill="#11734b"/><path d="M1706,753.5 h17 l-8.5,9 z" fill="#b10202"/><rect x="1841.4" y="743.4" width="29.2" height="29.2" rx="2.5" fill="none" stroke="#7f7f7f" stroke-width="2.8"/><rect x="2043.4" y="743.4" width="29.2" height="29.2" rx="2.5" fill="none" stroke="#7f7f7f" stroke-width="2.8"/><path d="M1444,807.5 h17 l-8.5,9 z" fill="#473821"/><path d="M1706,807.5 h17 l-8.5,9 z" fill="#11734b"/><rect x="1841.4" y="797.4" width="29.2" height="29.2" rx="2.5" fill="none" stroke="#7f7f7f" stroke-width="2.8"/><rect x="2043.4" y="797.4" width="29.2" height="29.2" rx="2.5" fill="none" stroke="#7f7f7f" stroke-width="2.8"/><path d="M1444,861.5 h17 l-8.5,9 z" fill="#000000"/><path d="M1706,861.5 h17 l-8.5,9 z" fill="#000000"/><rect x="1841.4" y="851.4" width="29.2" height="29.2" rx="2.5" fill="none" stroke="#7f7f7f" stroke-width="2.8"/><rect x="2043.4" y="851.4" width="29.2" height="29.2" rx="2.5" fill="none" stroke="#7f7f7f" stroke-width="2.8"/><path d="M2332.5,429.5 h15 l-7.5,8 z" fill="#7f7f7f"/><path d="M2332.5,483.5 h15 l-7.5,8 z" fill="#7f7f7f"/><path d="M2332.5,537.5 h15 l-7.5,8 z" fill="#7f7f7f"/><path d="M2332.5,591.5 h15 l-7.5,8 z" fill="#7f7f7f"/><path d="M2332.5,645.5 h15 l-7.5,8 z" fill="#7f7f7f"/><path d="M2332.5,699.5 h15 l-7.5,8 z" fill="#7f7f7f"/><path d="M2332.5,753.5 h15 l-7.5,8 z" fill="#7f7f7f"/><path d="M2332.5,807.5 h15 l-7.5,8 z" fill="#7f7f7f"/><path d="M2332.5,861.5 h15 l-7.5,8 z" fill="#7f7f7f"/><path d="M2332.5,915.5 h15 l-7.5,8 z" fill="#7f7f7f"/><path d="M2332.5,969.5 h15 l-7.5,8 z" fill="#7f7f7f"/><path d="M2332.5,1023.5 h15 l-7.5,8 z" fill="#7f7f7f"/><path d="M2332.5,1077.5 h15 l-7.5,8 z" fill="#7f7f7f"/><path d="M2332.5,1131.5 h15 l-7.5,8 z" fill="#7f7f7f"/><path d="M2332.5,1185.5 h15 l-7.5,8 z" fill="#7f7f7f"/></svg>
</body></html>
